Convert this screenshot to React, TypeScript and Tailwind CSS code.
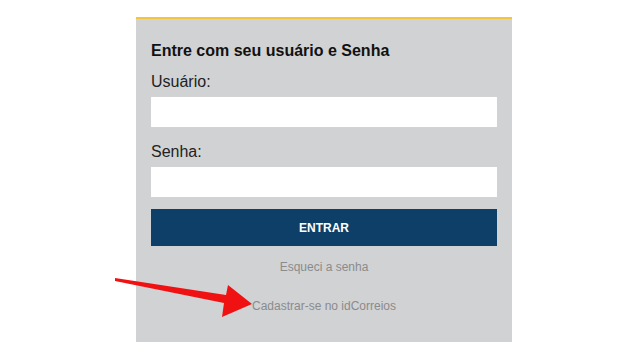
export default function App() {
  return (
    <div className="relative w-[640px] h-[359px] overflow-hidden bg-white font-['Liberation_Sans',Arial,sans-serif]">
      <div className="ml-[136px] mt-[17px] w-[376px] h-[325px] border-t-2 border-[#f2c53d] bg-[#d1d2d4] px-[15px] pt-[22px]">
        <h2 className="text-[16px] leading-[20px] font-bold text-[#111]">
          Entre com seu usuário e Senha
        </h2>

        {/* Usuário */}
        <label className="mt-[11px] block text-[16px] leading-[20px] text-[#222]">Usuário:</label>
        <input type="text" className="mt-[5px] block h-[30px] w-full bg-white outline-none" />

        {/* Senha */}
        <label className="mt-[15px] block text-[16px] leading-[20px] text-[#222]">Senha:</label>
        <input type="password" className="mt-[5px] block h-[30px] w-full bg-white outline-none" />

        <button
          type="button"
          className="mt-[12px] flex h-[37px] w-full items-center justify-center bg-[#0e3f68] text-[12px] font-bold text-white"
        >
          ENTRAR
        </button>

        <p className="mt-[13px] text-center text-[12px] leading-[16px] text-[#8b8b8b]">Esqueci a senha</p>
        <p className="mt-[23px] text-center text-[12px] leading-[16px] text-[#8b8b8b]">Cadastrar-se no idCorreios</p>
      </div>

      {/* annotation arrow */}
      <svg className="absolute left-0 top-0" width="640" height="359" viewBox="0 0 640 359" aria-hidden="true">
        <polygon
          points="115,278 226,295 228,285 252,304 222,317 224,303 115,281"
          fill="#f01212"
        />
      </svg>
    </div>
  )
}
